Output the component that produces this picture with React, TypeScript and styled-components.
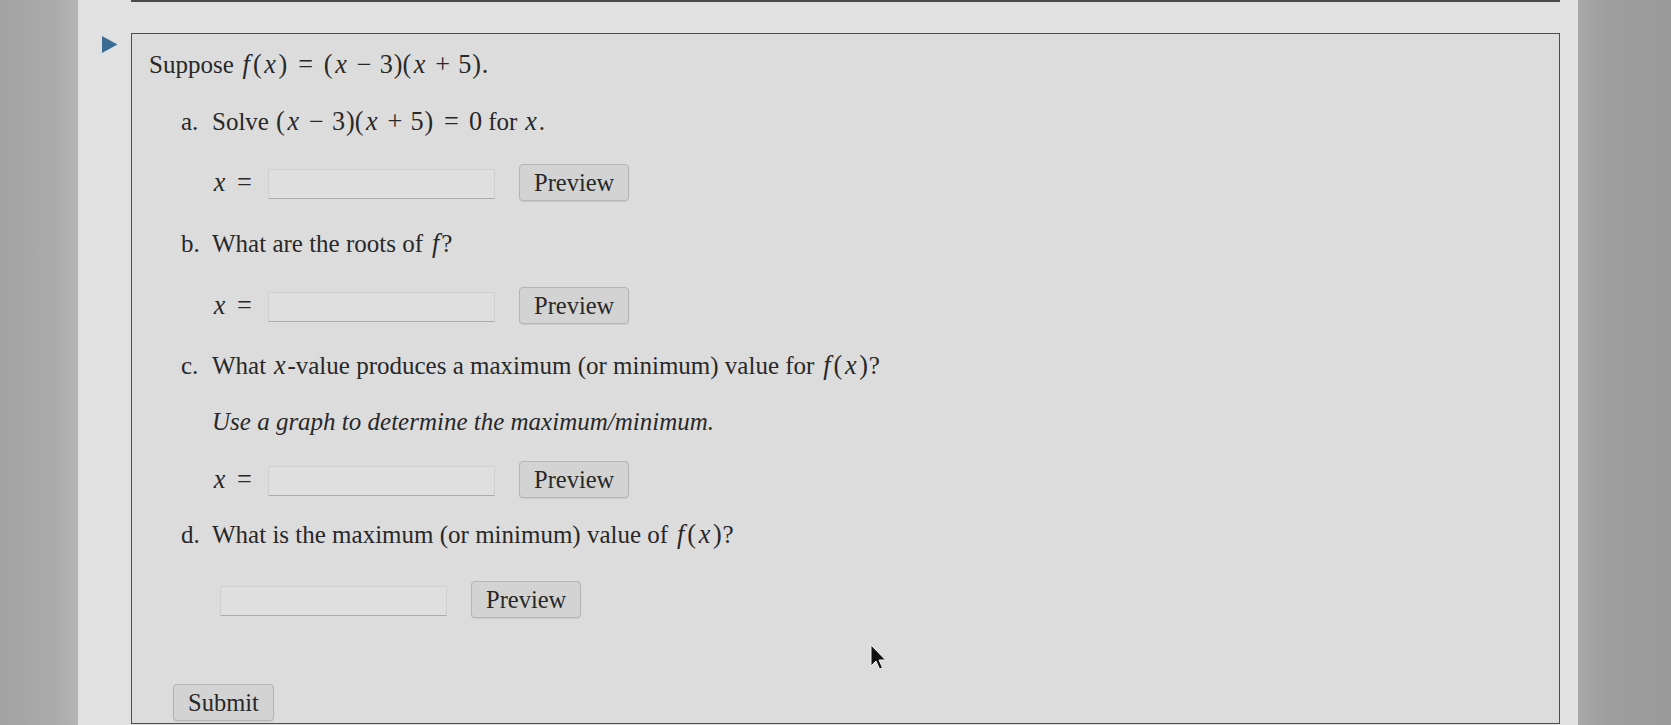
import React from 'react';
import styled, { createGlobalStyle } from 'styled-components';

const GlobalStyle = createGlobalStyle`
  html, body {
    margin: 0;
    padding: 0;
    background: #a6a6a6;
  }
  body {
    font-family: "Liberation Serif", "Times New Roman", serif;
    color: #282828;
  }
`;

const Screen = styled.div`
  position: relative;
  display: flex;
  width: 1671px;
  height: 725px;
  overflow: hidden;
`;

const SideStrip = styled.div<{ $w: number; $bg: string }>`
  width: ${p => p.$w}px;
  flex-shrink: 0;
  background: ${p => p.$bg};
`;

const Page = styled.div`
  width: 1500px;
  flex-shrink: 0;
  display: flex;
  flex-direction: column;
  background: #e1e1e1;
  padding-left: 23px;
  box-sizing: border-box;
`;

const PrevEdge = styled.div`
  margin-left: 30px;
  width: 1429px;
  height: 0;
  border-bottom: 2px solid #4a4a4a;
`;

const ProblemRow = styled.div`
  display: flex;
  align-items: flex-start;
  gap: 13px;
  margin-top: 31px;
`;

const Toggle = styled.svg`
  flex-shrink: 0;
  margin-top: 2px;
`;

const Card = styled.div`
  width: 1429px;
  height: 691px;
  box-sizing: border-box;
  border: 1.5px solid #4d4d4d;
  background: #dcdcdc;
  padding: 16px 0 0 17px;
  font-size: 25px;
  display: flex;
  flex-direction: column;
`;

const Line = styled.div<{ $mt?: number; $italic?: boolean }>`
  height: 30px;
  line-height: 30px;
  margin-top: ${p => p.$mt ?? 0}px;
  font-style: ${p => (p.$italic ? 'italic' : 'normal')};
  white-space: nowrap;
`;

const Part = styled.div<{ $mt: number }>`
  display: flex;
  margin-top: ${p => p.$mt}px;
  padding-left: 32px;
`;

const PartLabel = styled.span`
  width: 31px;
  flex-shrink: 0;
  height: 30px;
  line-height: 30px;
`;

const PartBody = styled.div`
  display: flex;
  flex-direction: column;
`;

const AnswerRow = styled.div<{ $mt: number; $indent?: number }>`
  display: flex;
  align-items: center;
  height: 37px;
  margin-top: ${p => p.$mt}px;
  padding-left: ${p => p.$indent ?? 0}px;
`;

const Eq = styled.span`
  width: 56px;
  flex-shrink: 0;
  white-space: nowrap;
`;

const AnswerBox = styled.input`
  width: 227px;
  height: 30px;
  box-sizing: border-box;
  margin: 3px 24px 0 0;
  background: #dfdfdf;
  border: 1px solid #d0d0d0;
  border-bottom: 1.5px solid #acacac;
  outline: none;
  font: inherit;
`;

const Button = styled.button`
  height: 37px;
  padding: 0 14px;
  background: #d3d3d3;
  border: 1px solid #b4b4b4;
  border-radius: 4px;
  box-shadow: 0 1px 1px rgba(0, 0, 0, 0.08);
  font-family: "Liberation Serif", "Times New Roman", serif;
  font-size: 24.5px;
  color: #282828;
`;

const SubmitButton = styled(Button)`
  margin: 66px 0 0 24px;
  align-self: flex-start;
  padding: 0 14px;
`;

/* MathJax-like spacing with Times glyphs */
const M = styled.span`
  font-size: 1.05em;
  white-space: nowrap;
`;

const MI = styled.i`
  font-style: italic;
  padding: 0 0.065em;
`;

const MF = styled.i`
  font-style: italic;
  padding: 0 0.08em 0 0.1em;
`;

const MP = styled.span`
  padding: 0 0.035em;
`;

const MRel = styled.span`
  padding: 0 0.38em;
`;

const MBin = styled.span`
  padding: 0 0.31em;
`;

const Cursor = styled.svg`
  position: absolute;
  left: 869px;
  top: 644px;
`;

const Fx = () => (
  <M>
    <MF>f</MF>
    <MP>(</MP>
    <MI>x</MI>
    <MP>)</MP>
  </M>
);

const Factors = () => (
  <>
    <MP>(</MP>
    <MI>x</MI>
    <MBin>−</MBin>3<MP>)(</MP>
    <MI>x</MI>
    <MBin>+</MBin>5<MP>)</MP>
  </>
);

const Answer = ({ mt, label = true, indent }: { mt: number; label?: boolean; indent?: number }) => (
  <AnswerRow $mt={mt} $indent={indent}>
    {label && (
      <Eq>
        <M>
          <MI>x</MI>
          <MRel>=</MRel>
        </M>
      </Eq>
    )}
    <AnswerBox aria-label="answer" />
    <Button>Preview</Button>
  </AnswerRow>
);

export default function App() {
  return (
    <>
      <GlobalStyle />
      <Screen>
        <SideStrip $w={78} $bg="linear-gradient(90deg, #a2a2a2 0%, #ababab 70%, #b4b4b4 100%)" />
        <Page>
          <PrevEdge />
          <ProblemRow>
            <Toggle width="17" height="19" viewBox="0 0 17 19">
              <path d="M1 1 L16.5 9.5 L1 18 Z" fill="#3b6c93" />
            </Toggle>
            <Card>
              <Line>
                Suppose{' '}
                <M>
                  <MF>f</MF>
                  <MP>(</MP>
                  <MI>x</MI>
                  <MP>)</MP>
                  <MRel>=</MRel>
                  <Factors />.
                </M>
              </Line>

              <Part $mt={27}>
                <PartLabel>a.</PartLabel>
                <PartBody>
                  <Line>
                    Solve{' '}
                    <M>
                      <Factors />
                      <MRel>=</MRel>0
                    </M>{' '}
                    for <M><MI>x</MI></M>.
                  </Line>
                  <Answer mt={27} />
                </PartBody>
              </Part>

              <Part $mt={28}>
                <PartLabel>b.</PartLabel>
                <PartBody>
                  <Line>
                    What are the roots of <M><MF>f</MF></M>?
                  </Line>
                  <Answer mt={28} />
                </PartBody>
              </Part>

              <Part $mt={27}>
                <PartLabel>c.</PartLabel>
                <PartBody>
                  <Line>
                    What <M><MI>x</MI></M>-value produces a maximum (or minimum) value for <Fx />?
                  </Line>
                  <Line $mt={26} $italic>
                    Use a graph to determine the maximum/minimum.
                  </Line>
                  <Answer mt={24} />
                </PartBody>
              </Part>

              <Part $mt={22}>
                <PartLabel>d.</PartLabel>
                <PartBody>
                  <Line>
                    What is the maximum (or minimum) value of <Fx />?
                  </Line>
                  <Answer mt={31} label={false} indent={8} />
                </PartBody>
              </Part>

              <SubmitButton>Submit</SubmitButton>
            </Card>
          </ProblemRow>
        </Page>
        <SideStrip $w={93} $bg="linear-gradient(90deg, #a8a8a8 0%, #9e9e9e 30%, #9a9a9a 100%)" />
        <Cursor width="18" height="27" viewBox="0 0 18 27">
          <path d="M2 1 L2 22 L7 17 L10.5 25 L13.5 23.8 L10 16 L16.5 16 Z" fill="#111" stroke="#f2f2f2" strokeWidth="1" />
        </Cursor>
      </Screen>
    </>
  );
}
